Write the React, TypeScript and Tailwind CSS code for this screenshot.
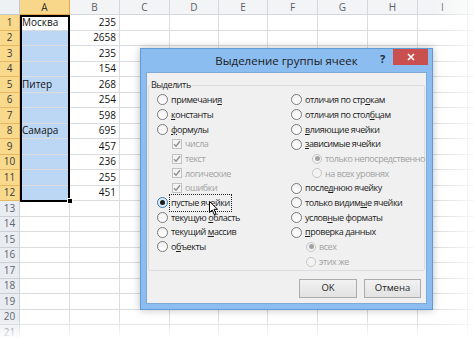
const cols = [
  { l: "A", w: "w-[50px]" },
  { l: "B", w: "w-[50px]" },
  { l: "C", w: "w-[50px]" },
  { l: "D", w: "w-[49px]" },
  { l: "E", w: "w-[49px]" },
  { l: "F", w: "w-[50px]" },
  { l: "G", w: "w-[50px]" },
  { l: "H", w: "w-[50px]" },
  { l: "I", w: "w-[50px]" },
  { l: "", w: "w-[20px]" },
];

const cells: Record<number, [string, string]> = {
  1: ["Москва", "235"],
  2: ["", "2658"],
  3: ["", "235"],
  4: ["", "154"],
  5: ["Питер", "268"],
  6: ["", "254"],
  7: ["", "598"],
  8: ["Самара", "695"],
  9: ["", "457"],
  10: ["", "236"],
  11: ["", "255"],
  12: ["", "451"],
};

type Item = {
  t: string;
  u?: number;
  kind: "radio" | "check";
  on?: boolean;
  dis?: boolean;
  ind?: string;
  small?: boolean;
  focus?: boolean;
};

const left: Item[] = [
  { t: "примечания", u: 9, kind: "radio" },
  { t: "константы", u: 0, kind: "radio" },
  { t: "формулы", u: 0, kind: "radio" },
  { t: "числа", kind: "check", on: true, dis: true, ind: "ml-[15px]" },
  { t: "текст", kind: "check", on: true, dis: true, ind: "ml-[15px]" },
  { t: "логические", kind: "check", on: true, dis: true, ind: "ml-[15px]" },
  { t: "ошибки", kind: "check", on: true, dis: true, ind: "ml-[15px]" },
  { t: "пустые ячейки", kind: "radio", on: true, focus: true },
  { t: "текущую область", u: 8, kind: "radio" },
  { t: "текущий массив", u: 8, kind: "radio" },
  { t: "объекты", u: 1, kind: "radio" },
];

const right: Item[] = [
  { t: "отличия по строкам", u: 14, kind: "radio" },
  { t: "отличия по столбцам", u: 15, kind: "radio" },
  { t: "влияющие ячейки", u: 0, kind: "radio" },
  { t: "зависимые ячейки", u: 0, kind: "radio" },
  { t: "только непосредственно", kind: "radio", on: true, dis: true, small: true, ind: "ml-[21px]" },
  { t: "на всех уровнях", kind: "radio", dis: true, small: true, ind: "ml-[21px]" },
  { t: "последнюю ячейку", u: 5, kind: "radio" },
  { t: "только видимые ячейки", u: 12, kind: "radio" },
  { t: "условные форматы", u: 5, kind: "radio" },
  { t: "проверка данных", u: 0, kind: "radio" },
  { t: "всех", kind: "radio", on: true, dis: true, small: true, ind: "ml-[15px]" },
  { t: "этих же", kind: "radio", dis: true, small: true, ind: "ml-[15px]" },
];

function Label({ t, u }: { t: string; u?: number }) {
  if (u === undefined) return <>{t}</>;
  return (
    <>
      {t.slice(0, u)}
      <span className="underline underline-offset-[1px]">{t[u]}</span>
      {t.slice(u + 1)}
    </>
  );
}

function Control({ it }: { it: Item }) {
  if (it.kind === "check") {
    return (
      <div className="w-[10px] h-[10px] shrink-0 border border-[#c2c2c2] bg-[#f4f4f4] flex items-center justify-center">
        <svg width="8" height="8" viewBox="0 0 8 8">
          <path d="M1 4.2 L3 6.2 L7 1.2" fill="none" stroke="#8f8f8f" strokeWidth="1.4" />
        </svg>
      </div>
    );
  }
  const size = it.small ? "w-[10px] h-[10px]" : "w-[11px] h-[11px]";
  const look = it.dis
    ? "border-[#c6c6c6] bg-[#f3f3f3]"
    : it.focus
      ? "border-[#3d7bad] bg-[#dcecfb]"
      : "border-[#7a7a7a] bg-linear-to-b from-[#f2f2f2] to-white";
  return (
    <div className={`${size} shrink-0 rounded-full border ${look} flex items-center justify-center`}>
      {it.on && (
        <div className={`w-[5px] h-[5px] rounded-full ${it.dis ? "bg-[#a3a3a3]" : "bg-[#1c1c1c]"}`} />
      )}
    </div>
  );
}

function Row({ it }: { it: Item }) {
  return (
    <div className={`h-[14.7px] flex items-center ${it.ind ?? ""}`}>
      <Control it={it} />
      <span
        className={`ml-[3px] whitespace-nowrap ${it.dis ? "text-[#a2a2a2]" : "text-[#1e1e1e]"} ${
          it.focus ? "outline-1 outline-dotted outline-[#222] outline-offset-[1px]" : ""
        }`}
      >
        <Label t={it.t} u={it.u} />
      </span>
    </div>
  );
}

function Sheet() {
  const rows = Array.from({ length: 21 }, (_, i) => i + 1);
  return (
    <div className="flex flex-col">
      <div className="flex h-[15px]">
        <div className="w-[20px] shrink-0 bg-[#eef1f4] border-r border-b border-[#c4c9cf]" />
        {cols.map((c) => (
          <div
            key={c.l}
            className={`${c.w} shrink-0 flex items-center justify-center border-r border-b text-[10px] ${
              c.l === "A"
                ? "bg-[#f8d68a] border-[#e2a951] text-[#333]"
                : "bg-[#f3f4f5] border-[#d3d6da] text-[#5b6068]"
            }`}
          >
            {c.l}
          </div>
        ))}
      </div>
      {rows.map((r) => {
        const d = cells[r];
        return (
          <div key={r} className="flex h-[15.5px]">
            <div
              className={`w-[20px] shrink-0 flex items-center justify-center border-r border-b text-[10px] ${
                r <= 12
                  ? "bg-[#f9d98b] border-[#e6b866] text-[#3a3a3a]"
                  : "bg-[#e9ecf0] border-[#cbd0d6] text-[#5d6670]"
              }`}
            >
              {r}
            </div>
            {cols.map((c) => {
              const blue = c.l === "A" && r >= 2 && r <= 12;
              const text = d ? (c.l === "A" ? d[0] : c.l === "B" ? d[1] : "") : "";
              return (
                <div
                  key={c.l}
                  className={`${c.w} shrink-0 flex items-center border-r border-b border-[#dadcdf] text-[10px] text-[#111] ${
                    blue ? "bg-[#bcd7f4]" : "bg-white"
                  } ${c.l === "B" ? "justify-end pr-[3px]" : "pl-[2px]"}`}
                >
                  {text}
                </div>
              );
            })}
          </div>
        );
      })}
    </div>
  );
}

function Dialog() {
  return (
    <div className="absolute left-[140px] top-[48px] w-[293px] h-[262px] bg-[#8cbdf0] border border-[#5f9ad3] shadow-[0_0_8px_rgba(0,0,0,0.25)] flex flex-col">
      <div className="relative h-[23px] flex items-center justify-center">
        <span className="text-[11.5px] text-[#1b1b1b]">Выделение группы ячеек</span>
        <span className="absolute left-[239px] top-[2px] text-[11px] font-bold text-[#1d2b3a]">?</span>
        <div className="absolute right-[4px] top-0 w-[35px] h-[16px] bg-[#c9504f] flex items-center justify-center">
          <svg width="8" height="8" viewBox="0 0 8 8">
            <path d="M1 1 L7 7 M7 1 L1 7" stroke="white" strokeWidth="1.6" />
          </svg>
        </div>
      </div>
      <div className="mx-[5px] mb-[5px] flex-1 bg-[#f0f0f0] border border-[#7faad6] flex flex-col text-[9px] tracking-[-0.45px]">
        <div className="relative mt-[12px] mx-[1px] h-[186px] border border-[#d9dde0] rounded-[2px]">
          <span className="absolute -top-[7px] left-[1px] px-[1px] bg-[#f0f0f0] text-[#1e1e1e] leading-[12px]">
            Выделить
          </span>
          <div className="grid grid-cols-[134px_1fr] pl-[8px] pt-[6.6px]">
            <div className="flex flex-col">
              {left.map((it) => (
                <Row key={it.t} it={it} />
              ))}
            </div>
            <div className="flex flex-col">
              {right.map((it) => (
                <Row key={it.t} it={it} />
              ))}
            </div>
          </div>
        </div>
        <div className="mt-[8px] flex justify-end gap-[7px] pr-[5px]">
          <div className="w-[58px] h-[19px] border border-[#acacac] bg-linear-to-b from-[#f2f2f2] to-[#e2e2e2] flex items-center justify-center text-[9.5px] text-[#1e1e1e] tracking-normal">
            OK
          </div>
          <div className="w-[57px] h-[19px] border border-[#acacac] bg-linear-to-b from-[#f2f2f2] to-[#e2e2e2] flex items-center justify-center text-[9.5px] text-[#1e1e1e] tracking-normal">
            Отмена
          </div>
        </div>
      </div>
    </div>
  );
}

export default function App() {
  return (
    <div className="relative w-[474px] h-[338px] overflow-hidden bg-white font-['Open_Sans',sans-serif]">
      <Sheet />
      {/* рамка выделения A1:A12 */}
      <div className="absolute left-[20px] top-[15px] w-[50px] h-[187px] border-2 border-black" />
      <div className="absolute left-[67px] top-[198px] w-[6px] h-[6px] bg-black border border-white" />
      <Dialog />
      <svg className="absolute left-[209px] top-[201px]" width="10" height="15" viewBox="0 0 10 15">
        <path d="M0.5 0.5 L0.5 11.5 L3.2 9 L5.2 13.6 L7 12.8 L5 8.3 L8.6 8.3 Z" fill="white" stroke="black" strokeWidth="1" />
      </svg>
      <div className="absolute top-0 right-0 w-[40px] h-full bg-linear-to-r from-white/0 to-white/80" />
      <div className="absolute bottom-0 left-0 w-full h-[20px] bg-linear-to-b from-white/0 to-white/90" />
    </div>
  );
}
